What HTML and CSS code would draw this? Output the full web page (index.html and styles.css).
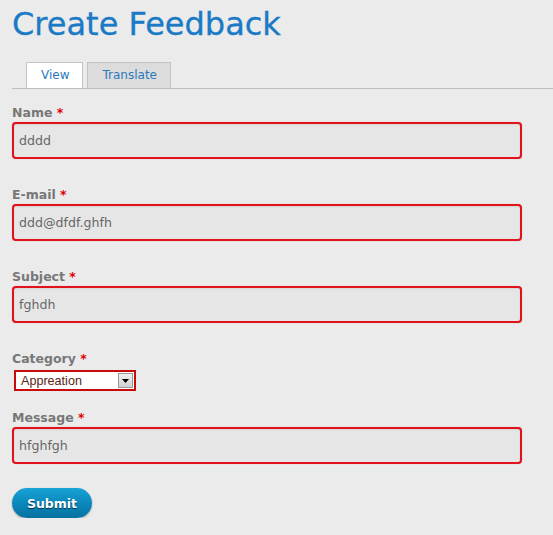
FILE: index.html
```html
<!DOCTYPE html>
<html>
<head>
<meta charset="utf-8">
<title>Create Feedback</title>
<link rel="stylesheet" href="styles.css">
</head>
<body>
<h1 class="title">Create Feedback</h1>
<div class="tabs">
  <a class="tab active">View</a>
  <a class="tab">Translate</a>
</div>
<form class="form">
  <div class="field">
    <label class="label">Name <span class="req">*</span></label>
    <input class="text" type="text" value="dddd">
  </div>
  <div class="field">
    <label class="label">E-mail <span class="req">*</span></label>
    <input class="text" type="text" value="ddd@dfdf.ghfh">
  </div>
  <div class="field">
    <label class="label">Subject <span class="req">*</span></label>
    <input class="text" type="text" value="fghdh">
  </div>
  <div class="field field-select">
    <label class="label">Category <span class="req">*</span></label>
    <div class="select">
      <span class="select-value">Appreation</span>
      <span class="select-arrow"><svg width="7" height="4" viewBox="0 0 7 4"><path d="M0 0H7L3.5 4Z" fill="#000"/></svg></span>
    </div>
  </div>
  <div class="field">
    <label class="label">Message <span class="req">*</span></label>
    <input class="text" type="text" value="hfghfgh">
  </div>
  <div class="actions">
    <button class="submit" type="button">Submit</button>
  </div>
</form>
</body>
</html>
```
FILE: styles.css
```css
html, body {
  margin: 0;
  background: #ebebeb;
}
body {
  padding: 5px 12px 0 12px;
  font-family: "DejaVu Sans", Verdana, sans-serif;
}
.title {
  margin: 0;
  font-size: 32px;
  line-height: 38px;
  font-weight: normal;
  color: #1a7ac6;
  -webkit-text-stroke: 0.3px #1a7ac6;
}
.tabs {
  display: flex;
  align-items: flex-end;
  gap: 4px;
  margin: 19px -12px 0 0;
  padding-left: 14px;
  border-bottom: 1px solid #bdbdbd;
}
.tab {
  display: block;
  height: 25px;
  line-height: 25px;
  padding: 0 13px 0 14px;
  border: 1px solid #c4c4c4;
  border-bottom: none;
  background: #dcdcdc;
  color: #2b79bd;
  font-size: 12px;
}
.tab.active {
  background: #ffffff;
}
.form {
  display: flex;
  flex-direction: column;
  margin-top: 14px;
}
.field {
  display: flex;
  flex-direction: column;
  margin-bottom: 26px;
}
.field-select {
  margin-bottom: 17px;
}
.label {
  font-size: 12.5px;
  line-height: 16px;
  font-weight: bold;
  color: #777777;
  padding-top: 2px;
  margin-bottom: 1px;
}
.req {
  color: #dd0000;
}
.text {
  box-sizing: border-box;
  width: 510px;
  height: 37px;
  margin: 0;
  padding: 0 5px;
  border: 2px solid #e0121c;
  border-radius: 4px;
  background: #e6e6e6;
  box-shadow: inset 0 1px 2px rgba(0,0,0,0.08), 0 0 1px rgba(224,18,28,0.4);
  font-family: "DejaVu Sans", Verdana, sans-serif;
  font-size: 12.6px;
  color: #676767;
  outline: none;
}
.select {
  box-sizing: border-box;
  display: flex;
  align-items: center;
  justify-content: space-between;
  width: 122px;
  height: 21px;
  margin-left: 2px;
  margin-top: 2px;
  border: 2px solid #c80a0a;
  background: #ffffff;
}
.select-value {
  padding-left: 5px;
  font-family: "Liberation Sans", Arial, sans-serif;
  font-size: 12.6px;
  color: #5b2414;
}
.select-arrow {
  box-sizing: border-box;
  display: flex;
  align-items: center;
  justify-content: center;
  width: 15px;
  height: 15px;
  margin-right: 1px;
  border: 1px solid #9a9a9a;
  background: linear-gradient(#f0f0f0, #d0d0d0);
}
.actions {
  margin-top: -2px;
}
.submit {
  width: 80px;
  height: 30px;
  border: none;
  border-radius: 15px;
  background: linear-gradient(#17a2d6, #0a86ba 55%, #07719f);
  box-shadow: 0 1px 2px rgba(0,0,0,0.35);
  color: #ffffff;
  font-family: "DejaVu Sans", Verdana, sans-serif;
  font-size: 12.5px;
  font-weight: bold;
  text-shadow: 0 1px 1px rgba(0,0,0,0.6);
  padding: 0;
}
```
